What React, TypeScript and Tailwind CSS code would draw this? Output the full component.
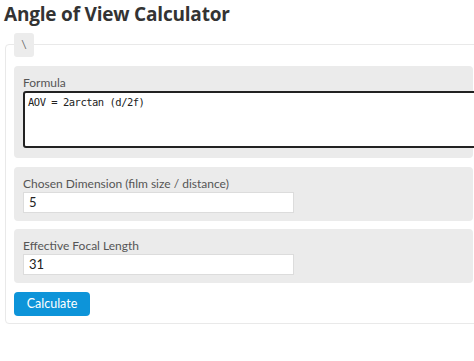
export default function App() {
  return (
    <div className="w-[474px] h-[361px] overflow-hidden bg-white text-[#333] font-['Open_Sans',sans-serif]">
      <h1 className="pl-[4px] pt-[2px] text-[19px] leading-[24px] font-bold text-[#333] tracking-[-0.2px]">
        Angle of View Calculator
      </h1>
      <div className="relative mt-[18px] ml-[5px] w-[490px] h-[280px] border border-[#e9e9e9] rounded-[4px] pl-[8px] pt-[21px] font-['Lato',sans-serif]">
        <div className="absolute left-[8px] top-[-12px] w-[20px] h-[24px] rounded-[3px] bg-[#ececec] flex items-center justify-center text-[12px] text-[#666]">
          \
        </div>
        <div className="flex flex-col w-[459px] rounded-[4px] bg-[#ebebeb] pl-[9px] pt-[8px] pb-[10px]">
          <label className="text-[12px] leading-[17px] text-[#555]">Formula</label>
          <div className="w-[470px] h-[57px] border-2 border-[#222] rounded-[3px] bg-white pl-[3px] pt-[2px] text-[10.5px] leading-[14px] tracking-[-0.5px] text-[#222] font-['DejaVu_Sans_Mono',monospace]">
            AOV = 2arctan (d/2f)
          </div>
        </div>
        <div className="flex flex-col mt-[9px] w-[459px] rounded-[4px] bg-[#ebebeb] pl-[9px] pt-[8px] pb-[8px]">
          <label className="text-[12px] leading-[17px] text-[#555]">Chosen Dimension (film size / distance)</label>
          <div className="w-[271px] h-[21px] border border-[#dcdcdc] bg-white pl-[5px] text-[13px] leading-[19px] text-[#222]">5</div>
        </div>
        <div className="flex flex-col mt-[8px] w-[459px] rounded-[4px] bg-[#ebebeb] pl-[9px] pt-[8px] pb-[8px]">
          <label className="text-[12px] leading-[17px] text-[#555]">Effective Focal Length</label>
          <div className="w-[271px] h-[21px] border border-[#dcdcdc] bg-white pl-[5px] text-[13px] leading-[19px] text-[#222]">31</div>
        </div>
        <button className="mt-[9px] w-[76px] h-[24px] rounded-[4px] bg-[#0d94d9] text-white text-[12.5px] leading-[24px]">
          Calculate
        </button>
      </div>
    </div>
  );
}
